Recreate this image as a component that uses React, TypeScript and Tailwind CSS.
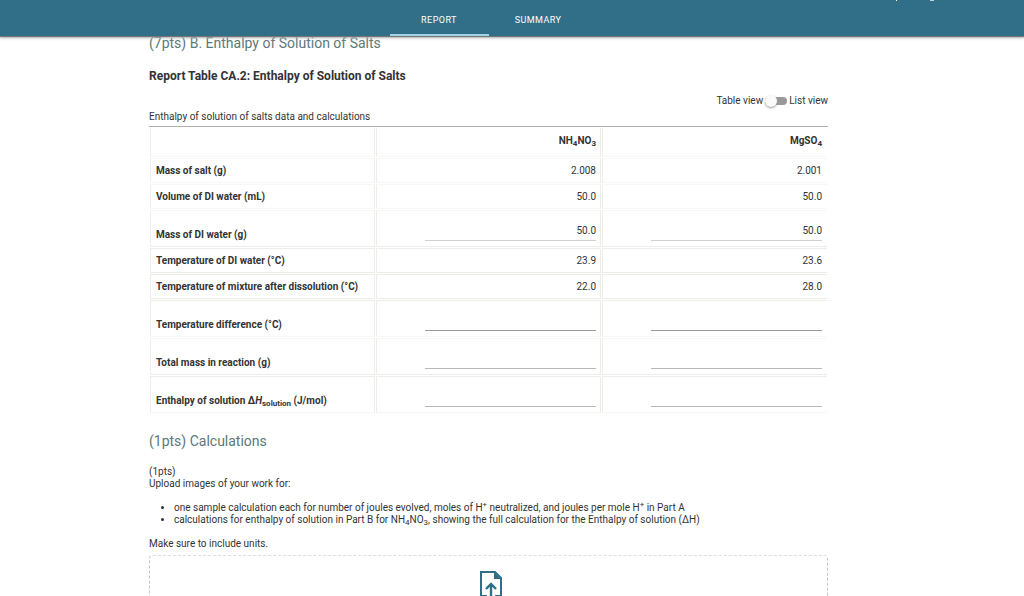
import type { ReactNode } from "react";

type Row = {
  label: ReactNode;
  name: string;
  values: [string, string];
  editable?: boolean;
  line?: string;
  border: string;
};

const rows: Row[] = [
  {
    label: "Mass of salt (g)",
    name: "Mass of salt",
    values: ["2.008", "2.001"],
    border: "border-x-[#eeede8] border-y-[#f8f8f7]",
  },
  {
    label: "Volume of DI water (mL)",
    name: "Volume of DI water",
    values: ["50.0", "50.0"],
    border: "border-x-[#eeede8] border-y-[#f8f8f7]",
  },
  {
    label: "Mass of DI water (g)",
    name: "Mass of DI water",
    values: ["50.0", "50.0"],
    editable: true,
    line: "border-[#d0d0d0]",
    border: "border-[#eeede8] border-t-[#f8f8f7]",
  },
  {
    label: "Temperature of DI water (°C)",
    name: "Temperature of DI water",
    values: ["23.9", "23.6"],
    border: "border-[#eeede8]",
  },
  {
    label: "Temperature of mixture after dissolution (°C)",
    name: "Temperature of mixture",
    values: ["22.0", "28.0"],
    border: "border-[#eeede8]",
  },
  {
    label: "Temperature difference (°C)",
    name: "Temperature difference",
    values: ["", ""],
    editable: true,
    line: "border-[#9a9a9a]",
    border: "border-[#eeede8] border-b-[#f8f8f7]",
  },
  {
    label: "Total mass in reaction (g)",
    name: "Total mass in reaction",
    values: ["", ""],
    editable: true,
    line: "border-[#b8b8b8]",
    border: "border-[#eeede8] border-t-[#f8f8f7]",
  },
  {
    label: (
      <>
        Enthalpy of solution Δ<i>H</i>
        <Sub>solution</Sub> (J/mol)
      </>
    ),
    name: "Enthalpy of solution",
    values: ["", ""],
    editable: true,
    line: "border-[#b8b8b8]",
    border: "border-[#eeede8] border-b-[#f5f5f3]",
  },
];

const salts = ["NH4NO3", "MgSO4"];

function Sub({ children }: { children: ReactNode }) {
  return <sub className="text-[8px] leading-none">{children}</sub>;
}

function Header() {
  return (
    <header className="sticky top-0 z-10 h-9 bg-[#316f88] pr-[47px] shadow-[0_1px_1px_#777,0_2px_3px_#bbb]">
      <nav className="flex h-full justify-center text-[9px] tracking-wider text-white">
        <a href="#report" className="flex w-[99px] items-center justify-center border-b-2 border-[#a5d3e6] pt-1.5">
          REPORT
        </a>
        <a href="#summary" className="flex w-[99px] items-center justify-center border-b-2 border-transparent pt-1.5">
          SUMMARY
        </a>
      </nav>
      <span className="absolute top-0 right-[127px] h-px w-px bg-white" />
      <span className="absolute top-0 right-[90px] h-px w-1 bg-white/70" />
    </header>
  );
}

function ViewSwitch() {
  return (
    <label className="flex h-4 items-center justify-end">
      Table view
      <input type="checkbox" role="switch" aria-label="List view" className="peer sr-only" />
      <span className="mx-[2px] flex h-2 w-[22px] items-center rounded-full bg-[#999]">
        <span className="size-3 shrink-0 rounded-full bg-[#fafafa] shadow-[0_1px_2px_#999]" />
      </span>
      List view
    </label>
  );
}

function DataTable() {
  return (
    <table className="w-full table-fixed border-separate border-spacing-px border-t border-[#b0b0b0]">
      <caption className="pb-[3px] text-left">Enthalpy of solution of salts data and calculations</caption>
      <thead>
        <tr className="h-[29px]">
          <td className="border-x border-b border-x-[#eeede8] border-b-[#f8f8f7]" />
          <th scope="col" className="border-x border-b border-x-[#eeede8] border-b-[#f8f8f7] pr-1 pb-[3px] text-right">
            NH<Sub>4</Sub>NO<Sub>3</Sub>
          </th>
          <th scope="col" className="border-b border-l border-b-[#f8f8f7] border-l-[#eeede8] pr-[5px] pb-[3px] text-right">
            MgSO<Sub>4</Sub>
          </th>
        </tr>
      </thead>
      <tbody>
        {rows.map((row) => (
          <tr key={row.name} className={row.editable ? "h-[37px] align-bottom" : "h-[25px]"}>
            <th scope="row" className={`border px-[5px] py-1 text-left leading-[14px] ${row.border}`}>
              {row.label}
            </th>
            {row.values.map((value, i) => (
              <td
                key={salts[i]}
                className={`border py-[5px] pr-1 pl-[5px] text-right last:border-r-0 last:pr-[5px] ${row.border}`}
              >
                {row.editable ? (
                  <input
                    type="text"
                    aria-label={`${row.name}, ${salts[i]}`}
                    defaultValue={value}
                    className={`ml-auto block h-5 w-4/5 border-b text-right outline-none ${row.line}`}
                  />
                ) : (
                  value
                )}
              </td>
            ))}
          </tr>
        ))}
      </tbody>
    </table>
  );
}

function UploadIcon() {
  return (
    <svg width="22" height="26" viewBox="0 0 22 26" fill="none" stroke="#316f88" strokeWidth="2">
      <path d="M7 25H1V1h14l6 6v18h-6" />
      <path d="M14 1v7h7z" fill="#316f88" stroke="none" />
      <path d="M11 26V13M6 18l5-5 5 5" strokeWidth="2.4" />
    </svg>
  );
}

export default function App() {
  return (
    <div className="min-h-screen bg-white font-[Roboto,sans-serif] text-[10px] leading-3 text-[#333]">
      <Header />
      <main className="-mt-[3px] pr-[47px]">
        <div className="mx-auto max-w-[679px]">
          <h2 className="text-[14px] leading-5 text-[#5c7878]">(7pts) B. Enthalpy of Solution of Salts</h2>
          <h3 className="mt-[13px] mb-[7px] text-[12px] leading-5 font-bold">
            Report Table CA.2: Enthalpy of Solution of Salts
          </h3>
          <ViewSwitch />
          <div className="pt-[2px]">
            <DataTable />
          </div>

          <h2 className="mt-[17px] text-[14px] leading-5 text-[#5c7878]">(1pts) Calculations</h2>
          <div className="mt-[15px]">
            <p>(1pts)</p>
            <p>Upload images of your work for:</p>
            <ul className="my-3 list-disc pl-[25px]">
              <li>
                one sample calculation each for number of joules evolved, moles of H
                <sup className="text-[8px] leading-none">+</sup> neutralized, and joules per mole H
                <sup className="text-[8px] leading-none">+</sup> in Part A
              </li>
              <li>
                calculations for enthalpy of solution in Part B for NH<Sub>4</Sub>NO<Sub>3</Sub>, showing the full
                calculation for the Enthalpy of solution (ΔH)
              </li>
            </ul>
            <p>Make sure to include units.</p>
          </div>
          <button
            type="button"
            aria-label="Upload images"
            className="mt-[5px] flex h-24 w-full justify-center rounded border border-dashed border-x-[#c4c4c4] border-y-[#dedede] pt-[15px] pl-1"
          >
            <UploadIcon />
          </button>
        </div>
      </main>
    </div>
  );
}
